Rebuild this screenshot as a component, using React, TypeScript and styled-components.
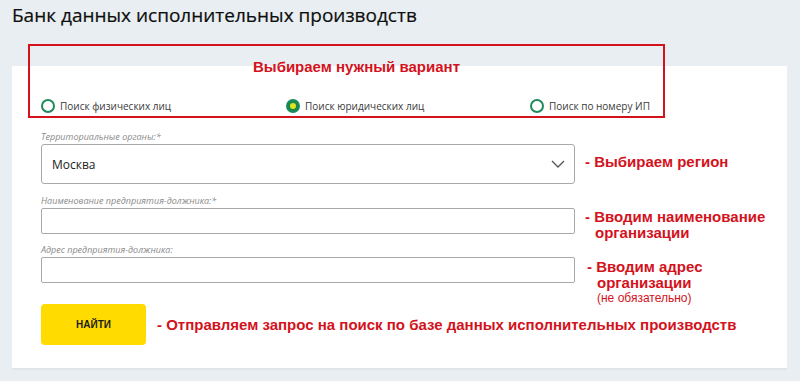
import React, { useState } from 'react';
import styled, { createGlobalStyle } from 'styled-components';

const GlobalStyle = createGlobalStyle`
  html, body {
    margin: 0;
    padding: 0;
    background: #e8eef1;
  }
  * {
    box-sizing: border-box;
  }
`;

const RED = '#d3121c';

const Page = styled.div`
  position: relative;
  width: 800px;
  height: 381px;
  padding: 2px 13px 0 12px;
  background: #e8eef1;
  font-family: 'Open Sans', 'Noto Sans', sans-serif;
  overflow: hidden;
`;

const Title = styled.h1`
  margin: 0;
  font-size: 19px;
  line-height: 26px;
  font-weight: 400;
  color: #0e0e0e;
  -webkit-text-stroke: 0.2px #0e0e0e;
`;

const Card = styled.div`
  margin-top: 38px;
  background: #ffffff;
  padding: 33px 0 23px 29px;
  box-shadow: 0 2px 0 #dfe6ea;
`;

const RadioRow = styled.div`
  display: grid;
  grid-template-columns: 245px 244px auto;
  height: 14px;
  align-items: center;
`;

const RadioItem = styled.label`
  display: flex;
  align-items: center;
  gap: 5px;
  font-size: 10px;
  color: #3a3a3a;
  cursor: pointer;
`;

const RadioMark = styled.span<{ $checked: boolean }>`
  width: 14px;
  height: 14px;
  border-radius: 50%;
  border: 2px solid #1c8a5a;
  background: ${p => (p.$checked ? '#17894c' : '#fff')};
  display: flex;
  align-items: center;
  justify-content: center;

  &::after {
    content: '';
    display: ${p => (p.$checked ? 'block' : 'none')};
    width: 6px;
    height: 6px;
    border-radius: 50%;
    background: #e5e321;
  }
`;

const Row = styled.div<{ $height: number; $gap: number }>`
  display: grid;
  grid-template-columns: 534px auto;
  column-gap: 10px;
  height: ${p => p.$height}px;
  margin-top: ${p => p.$gap}px;
`;

const Field = styled.div`
  display: flex;
  flex-direction: column;
`;

const FieldLabel = styled.div`
  font-size: 9px;
  line-height: 12px;
  font-style: italic;
  color: #8a8a8a;
  margin-bottom: 1px;
`;

const SelectBox = styled.div`
  height: 40px;
  border: 1px solid #a9a9a9;
  border-radius: 3px;
  display: flex;
  align-items: center;
  justify-content: space-between;
  padding: 0 9px 0 10px;
  font-size: 12px;
  color: #222;
`;

const TextInput = styled.input`
  height: 26px;
  border: 1px solid #a9a9a9;
  border-radius: 2px;
  padding: 0 10px;
  font-family: inherit;
  font-size: 12px;
  outline: none;
`;

const Note = styled.div<{ $top: number; $shift?: number }>`
  padding-top: ${p => p.$top}px;
  padding-left: ${p => p.$shift || 0}px;
  font-family: 'Liberation Sans', Arial, sans-serif;
  font-weight: 700;
  font-size: 15px;
  line-height: 16px;
  color: ${RED};
  white-space: nowrap;
`;

const NoteLine = styled.div<{ $indent?: boolean }>`
  padding-left: ${p => (p.$indent ? '10px' : '0')};
`;

const NoteSmall = styled.div`
  padding-left: 10px;
  font-weight: 400;
  font-size: 12px;
  line-height: 15px;
`;

const ButtonRow = styled.div`
  display: flex;
  align-items: center;
  gap: 11px;
  margin-top: 21px;
`;

const SearchButton = styled.button`
  width: 105px;
  height: 41px;
  border: none;
  border-radius: 4px;
  background: #ffdb00;
  font-family: 'Liberation Sans', Arial, sans-serif;
  font-weight: 700;
  font-size: 10px;
  color: #1e1e1e;
  cursor: pointer;
`;

const ButtonNote = styled.div`
  font-family: 'Liberation Sans', Arial, sans-serif;
  font-weight: 700;
  font-size: 15px;
  color: ${RED};
  white-space: nowrap;
`;

const Callout = styled.div`
  position: absolute;
  left: 28px;
  top: 44px;
  width: 637px;
  height: 74px;
  border: 2px solid ${RED};
  pointer-events: none;
  display: flex;
  justify-content: center;
  padding: 12px 0 0 20px;
`;

const CalloutText = styled.div`
  font-family: 'Liberation Sans', Arial, sans-serif;
  font-weight: 700;
  font-size: 15px;
  line-height: 18px;
  color: ${RED};
`;

const Chevron = () => (
  <svg width="14" height="8" viewBox="0 0 14 8" fill="none">
    <polyline points="1,1 7,7 13,1" stroke="#555" strokeWidth="1.3" />
  </svg>
);

const options = ['Поиск физических лиц', 'Поиск юридических лиц', 'Поиск по номеру ИП'];

const App: React.FC = () => {
  const [mode, setMode] = useState(1);

  return (
    <Page>
      <GlobalStyle />
      <Title>Банк данных исполнительных производств</Title>
      <Card>
        <RadioRow>
          {options.map((o, i) => (
            <RadioItem key={o} onClick={() => setMode(i)}>
              <RadioMark $checked={mode === i} />
              {o}
            </RadioItem>
          ))}
        </RadioRow>

        <Row $height={53} $gap={18}>
          <Field>
            <FieldLabel>Территориальные органы:*</FieldLabel>
            <SelectBox>
              Москва
              <Chevron />
            </SelectBox>
          </Field>
          <Note $top={23}>- Выбираем регион</Note>
        </Row>

        <Row $height={39} $gap={11}>
          <Field>
            <FieldLabel>Наименование предприятия-должника:*</FieldLabel>
            <TextInput />
          </Field>
          <Note $top={14}>
            <NoteLine>- Вводим наименование</NoteLine>
            <NoteLine $indent>организации</NoteLine>
          </Note>
        </Row>

        <Row $height={39} $gap={10}>
          <Field>
            <FieldLabel>Адрес предприятия-должника:</FieldLabel>
            <TextInput />
          </Field>
          <Note $top={15} $shift={2}>
            <NoteLine>- Вводим адрес</NoteLine>
            <NoteLine $indent>организации</NoteLine>
            <NoteSmall>(не обязательно)</NoteSmall>
          </Note>
        </Row>

        <ButtonRow>
          <SearchButton>НАЙТИ</SearchButton>
          <ButtonNote>- Отправляем запрос на поиск по базе данных исполнительных производств</ButtonNote>
        </ButtonRow>
      </Card>

      <Callout>
        <CalloutText>Выбираем нужный вариант</CalloutText>
      </Callout>
    </Page>
  );
};

export default App;
